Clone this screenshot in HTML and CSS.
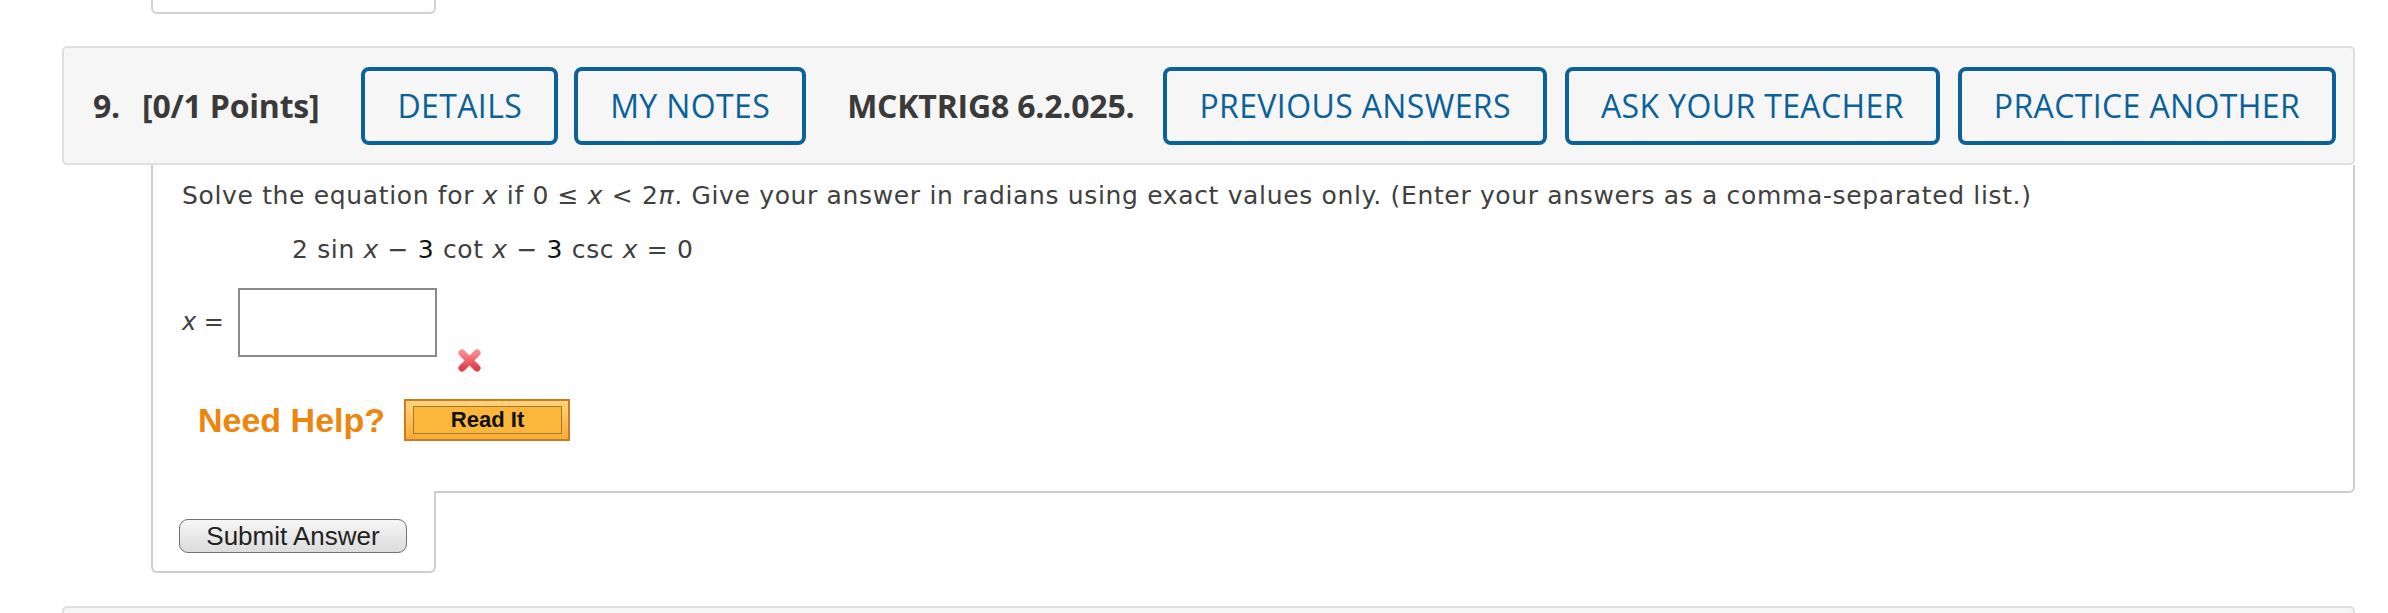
FILE: index.html
```html
<!DOCTYPE html>
<html>
<head>
<meta charset="utf-8">
<title>Question 9</title>
<link rel="stylesheet" href="styles.css">
</head>
<body>
<div class="page">
  <div class="prev-tab"></div>
  <div class="question">
    <div class="qhead">
      <span class="qnum">9.</span>
      <span class="qpts">[0/1 Points]</span>
      <button class="hbtn hbtn-first">DETAILS</button>
      <button class="hbtn hbtn-notes">MY NOTES</button>
      <span class="qcode">MCKTRIG8 6.2.025.</span>
      <button class="hbtn">PREVIOUS ANSWERS</button>
      <button class="hbtn">ASK YOUR TEACHER</button>
      <button class="hbtn hbtn-last">PRACTICE ANOTHER</button>
    </div>
    <div class="qbody">
      <p class="prompt">Solve the equation for <i>x</i> if 0 ≤ <i>x</i> &lt; 2<i>π</i>. Give your answer in radians using exact values only. (Enter your answers as a comma-separated list.)</p>
      <p class="eq">2 sin <i>x</i> − <span class="dark">3</span> cot <i>x</i> − <span class="dark">3</span> csc <i>x</i> = 0</p>
      <div class="answer-row">
        <span class="var"><i>x</i> =</span>
        <span class="answer-box"></span>
        <svg class="wrong" width="27" height="27" viewBox="0 0 27 27">
          <defs>
            <linearGradient id="xg" x1="0" y1="0" x2="0" y2="1">
              <stop offset="0" stop-color="#f98890"/>
              <stop offset="1" stop-color="#e0404b"/>
            </linearGradient>
          </defs>
          <path d="M6 6 L21 21 M21 6 L6 21" stroke="url(#xg)" stroke-width="7" stroke-linecap="round" fill="none"/>
        </svg>
      </div>
      <div class="help-row">
        <span class="need-help">Need Help?</span>
        <span class="read-it"><span class="read-it-inner">Read It</span></span>
      </div>
    </div>
    <div class="submit-tab">
      <button class="submit">Submit Answer</button>
    </div>
  </div>
  <div class="next-head"></div>
</div>
</body>
</html>
```

FILE: styles.css
```css
html, body {
  margin: 0;
  padding: 0;
  background: #ffffff;
}

body {
  width: 2388px;
  height: 613px;
  overflow: hidden;
}

.page {
  padding: 0 33px 0 62px;
}

.prev-tab {
  margin-left: 89px;
  width: 285px;
  height: 14px;
  box-sizing: border-box;
  border: 2px solid #d2d2d2;
  border-top: none;
  border-radius: 0 0 6px 6px;
}

.question {
  margin-top: 32px;
}

.qhead {
  display: flex;
  align-items: center;
  height: 119px;
  box-sizing: border-box;
  border: 2px solid #dedede;
  border-radius: 5px;
  background: #f6f6f6;
  padding: 0 18px 0 29px;
  font-family: "Open Sans", sans-serif;
}

.qnum,
.qpts,
.qcode {
  font-size: 32px;
  font-weight: 700;
  color: #3a3a3a;
  white-space: nowrap;
  letter-spacing: -0.2px;
}

.qnum {
  margin-right: 22px;
}

.qpts {
  margin-right: 42px;
}

.qcode {
  margin-right: 29px;
}

.hbtn {
  height: 78px;
  box-sizing: border-box;
  border: 4px solid #0b6199;
  border-radius: 8px;
  background: transparent;
  color: #0b6199;
  font-family: "Open Sans", sans-serif;
  font-size: 32px;
  font-weight: 400;
  letter-spacing: 0.38px;
  padding: 0 32px;
  margin: 0 18px 0 0;
  white-space: nowrap;
}

.hbtn-first {
  margin-right: 16px;
}

.hbtn-notes {
  margin-right: 41px;
}

.hbtn-last {
  margin-right: 0;
}

.qbody {
  margin-left: 89px;
  height: 328px;
  box-sizing: border-box;
  border: 2px solid #cdcdcd;
  border-top: none;
  border-radius: 0 0 6px 0;
  padding: 16px 0 0 29px;
  font-family: "DejaVu Sans", Verdana, sans-serif;
  color: #404040;
}

.prompt {
  margin: 0;
  font-size: 25px;
  letter-spacing: 0.65px;
  line-height: 30px;
  white-space: nowrap;
}

.eq {
  margin: 24px 0 0 110px;
  font-size: 25px;
  letter-spacing: 0.65px;
  line-height: 30px;
  white-space: nowrap;
}

.dark {
  color: #111;
}

.answer-row {
  display: flex;
  align-items: flex-start;
  margin-top: 23px;
}

.var {
  font-size: 24px;
  line-height: 69px;
  margin-right: 14px;
}

.answer-box {
  width: 199px;
  height: 69px;
  box-sizing: border-box;
  border: 2px solid #8a8a8a;
  background: #fff;
}

.wrong {
  margin: 59px 0 0 19px;
}

.help-row {
  display: flex;
  align-items: center;
  margin: 25px 0 0 16px;
}

.need-help {
  font-family: "Liberation Sans", Arial, sans-serif;
  font-weight: 700;
  font-size: 34px;
  color: #ec860e;
  margin-right: 19px;
}

.read-it {
  display: flex;
  width: 166px;
  height: 42px;
  box-sizing: border-box;
  border: 2px solid #cf7b1d;
  background: linear-gradient(#fdd47f, #f7ac36);
  padding: 5px 6px 5px 7px;
}

.read-it-inner {
  flex: 1;
  display: flex;
  align-items: center;
  justify-content: center;
  border: 1px solid #a9782c;
  background: #fbb63c;
  font-family: "Liberation Sans", Arial, sans-serif;
  font-weight: 700;
  font-size: 22px;
  color: #111;
}

.submit-tab {
  position: relative;
  margin: -2px 0 0 89px;
  width: 285px;
  height: 82px;
  box-sizing: border-box;
  border: 2px solid #cdcdcd;
  border-top: none;
  border-radius: 0 0 6px 6px;
  background: #fff;
  padding: 28px 0 0 26px;
}

.submit {
  display: block;
  width: 228px;
  height: 34px;
  box-sizing: border-box;
  border: 1.5px solid #707070;
  border-radius: 9px;
  background: linear-gradient(#f6f6f6, #dcdcdc);
  font-family: "Liberation Sans", Arial, sans-serif;
  font-size: 26px;
  color: #222;
  padding: 0;
  line-height: 30px;
}

.next-head {
  margin-top: 33px;
  height: 100px;
  box-sizing: border-box;
  border: 2px solid #dedede;
  border-radius: 5px;
  background: #f6f6f6;
}
```
